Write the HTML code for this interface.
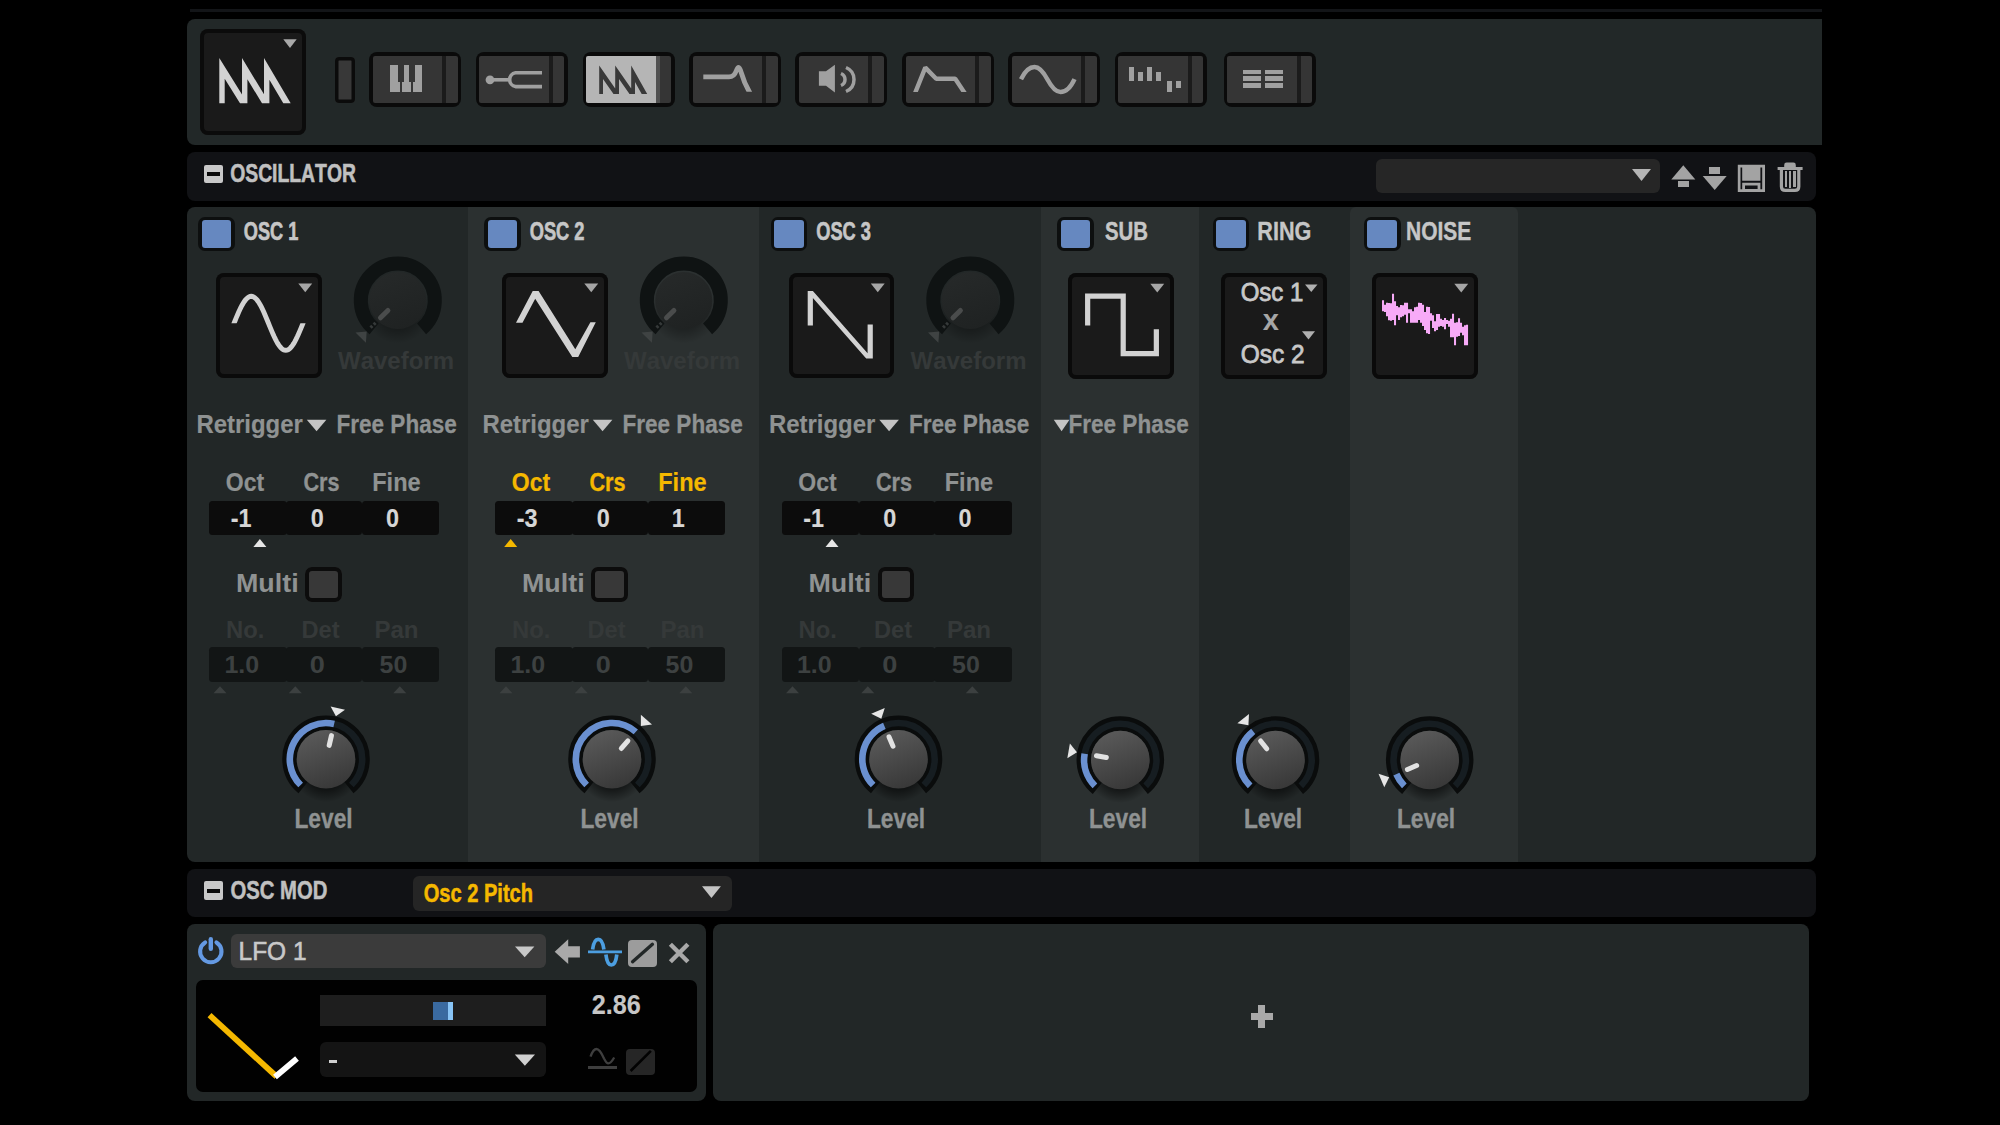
<!DOCTYPE html>
<html><head><meta charset="utf-8"><title>Oscillator</title>
<style>
html,body{margin:0;padding:0;background:#000;width:2000px;height:1125px;overflow:hidden;}
#root{position:relative;width:2000px;height:1125px;background:#000;}
#root>div{position:absolute;}
svg{position:absolute;left:0;top:0;}
text{font-family:"Liberation Sans",sans-serif;font-kerning:none;}
</style></head><body><div id="root">
<div style="left:190.00px;top:9.00px;width:1632.00px;height:3.30px;background:#131518;"></div>
<div style="left:187.00px;top:19.00px;width:1635.00px;height:126.00px;background:#222828;border-radius:8px 0 0 8px;"></div>
<div style="left:200.00px;top:29.00px;width:106.00px;height:106.00px;background:#1a1a1a;border-radius:8px;box-shadow:inset 0 0 0 4px #0b0b0b;"></div>
<div style="left:335.30px;top:56.70px;width:19.40px;height:46.00px;background:#383838;border-radius:4px;box-shadow:inset 0 0 0 3.5px #0b0b0b;"></div>
<div style="left:369.00px;top:52.00px;width:92.00px;height:54.50px;background:#0a0a0a;border-radius:8px;"></div>
<div style="left:372.50px;top:55.50px;width:69.50px;height:47.50px;background:#353535;border-radius:2px 0 0 2px;"></div>
<div style="left:442.00px;top:55.50px;width:4.00px;height:47.50px;background:#1b1b1b;"></div>
<div style="left:446.00px;top:55.50px;width:11.50px;height:47.50px;background:#353535;border-radius:0 2px 2px 0;"></div>
<div style="left:475.50px;top:52.00px;width:92.00px;height:54.50px;background:#0a0a0a;border-radius:8px;"></div>
<div style="left:479.00px;top:55.50px;width:69.50px;height:47.50px;background:#353535;border-radius:2px 0 0 2px;"></div>
<div style="left:548.50px;top:55.50px;width:4.00px;height:47.50px;background:#1b1b1b;"></div>
<div style="left:552.50px;top:55.50px;width:11.50px;height:47.50px;background:#353535;border-radius:0 2px 2px 0;"></div>
<div style="left:582.50px;top:52.00px;width:92.00px;height:54.50px;background:#0a0a0a;border-radius:8px;"></div>
<div style="left:586.00px;top:55.50px;width:69.50px;height:47.50px;background:#b5b5b5;border-radius:2px 0 0 2px;"></div>
<div style="left:655.50px;top:55.50px;width:4.00px;height:47.50px;background:#505050;"></div>
<div style="left:659.50px;top:55.50px;width:11.50px;height:47.50px;background:#353535;border-radius:0 2px 2px 0;"></div>
<div style="left:689.00px;top:52.00px;width:92.00px;height:54.50px;background:#0a0a0a;border-radius:8px;"></div>
<div style="left:692.50px;top:55.50px;width:69.50px;height:47.50px;background:#353535;border-radius:2px 0 0 2px;"></div>
<div style="left:762.00px;top:55.50px;width:4.00px;height:47.50px;background:#1b1b1b;"></div>
<div style="left:766.00px;top:55.50px;width:11.50px;height:47.50px;background:#353535;border-radius:0 2px 2px 0;"></div>
<div style="left:795.00px;top:52.00px;width:92.00px;height:54.50px;background:#0a0a0a;border-radius:8px;"></div>
<div style="left:798.50px;top:55.50px;width:69.50px;height:47.50px;background:#353535;border-radius:2px 0 0 2px;"></div>
<div style="left:868.00px;top:55.50px;width:4.00px;height:47.50px;background:#1b1b1b;"></div>
<div style="left:872.00px;top:55.50px;width:11.50px;height:47.50px;background:#353535;border-radius:0 2px 2px 0;"></div>
<div style="left:902.00px;top:52.00px;width:92.00px;height:54.50px;background:#0a0a0a;border-radius:8px;"></div>
<div style="left:905.50px;top:55.50px;width:69.50px;height:47.50px;background:#353535;border-radius:2px 0 0 2px;"></div>
<div style="left:975.00px;top:55.50px;width:4.00px;height:47.50px;background:#1b1b1b;"></div>
<div style="left:979.00px;top:55.50px;width:11.50px;height:47.50px;background:#353535;border-radius:0 2px 2px 0;"></div>
<div style="left:1008.00px;top:52.00px;width:92.00px;height:54.50px;background:#0a0a0a;border-radius:8px;"></div>
<div style="left:1011.50px;top:55.50px;width:69.50px;height:47.50px;background:#353535;border-radius:2px 0 0 2px;"></div>
<div style="left:1081.00px;top:55.50px;width:4.00px;height:47.50px;background:#1b1b1b;"></div>
<div style="left:1085.00px;top:55.50px;width:11.50px;height:47.50px;background:#353535;border-radius:0 2px 2px 0;"></div>
<div style="left:1114.50px;top:52.00px;width:92.00px;height:54.50px;background:#0a0a0a;border-radius:8px;"></div>
<div style="left:1118.00px;top:55.50px;width:69.50px;height:47.50px;background:#353535;border-radius:2px 0 0 2px;"></div>
<div style="left:1187.50px;top:55.50px;width:4.00px;height:47.50px;background:#1b1b1b;"></div>
<div style="left:1191.50px;top:55.50px;width:11.50px;height:47.50px;background:#353535;border-radius:0 2px 2px 0;"></div>
<div style="left:1223.50px;top:52.00px;width:92.00px;height:54.50px;background:#0a0a0a;border-radius:8px;"></div>
<div style="left:1227.00px;top:55.50px;width:69.50px;height:47.50px;background:#353535;border-radius:2px 0 0 2px;"></div>
<div style="left:1296.50px;top:55.50px;width:4.00px;height:47.50px;background:#1b1b1b;"></div>
<div style="left:1300.50px;top:55.50px;width:11.50px;height:47.50px;background:#353535;border-radius:0 2px 2px 0;"></div>
<div style="left:390.40px;top:64.80px;width:7.20px;height:18.20px;background:#a0a0a0;"></div>
<div style="left:404.00px;top:64.80px;width:4.80px;height:18.20px;background:#a0a0a0;"></div>
<div style="left:415.20px;top:64.80px;width:6.80px;height:18.20px;background:#a0a0a0;"></div>
<div style="left:390.40px;top:82.00px;width:9.30px;height:10.00px;background:#a0a0a0;"></div>
<div style="left:401.90px;top:82.00px;width:9.00px;height:10.00px;background:#a0a0a0;"></div>
<div style="left:413.10px;top:82.00px;width:8.90px;height:10.00px;background:#a0a0a0;"></div>
<div style="left:1129.30px;top:67.20px;width:5.10px;height:13.60px;background:#a0a0a0;"></div>
<div style="left:1138.40px;top:71.70px;width:4.80px;height:9.10px;background:#a0a0a0;"></div>
<div style="left:1147.20px;top:67.20px;width:4.80px;height:13.60px;background:#a0a0a0;"></div>
<div style="left:1156.00px;top:71.70px;width:5.10px;height:9.10px;background:#a0a0a0;"></div>
<div style="left:1167.20px;top:80.80px;width:4.80px;height:11.20px;background:#a0a0a0;"></div>
<div style="left:1176.00px;top:80.80px;width:5.10px;height:6.90px;background:#a0a0a0;"></div>
<div style="left:1242.90px;top:69.60px;width:18.20px;height:4.30px;background:#a0a0a0;"></div>
<div style="left:1242.90px;top:76.30px;width:18.20px;height:4.50px;background:#a0a0a0;"></div>
<div style="left:1242.90px;top:83.20px;width:18.20px;height:4.50px;background:#a0a0a0;"></div>
<div style="left:1264.80px;top:69.60px;width:18.40px;height:4.30px;background:#a0a0a0;"></div>
<div style="left:1264.80px;top:76.30px;width:18.40px;height:4.50px;background:#a0a0a0;"></div>
<div style="left:1264.80px;top:83.20px;width:18.40px;height:4.50px;background:#a0a0a0;"></div>
<div style="left:187.00px;top:151.50px;width:1628.60px;height:49.00px;background:#111215;border-radius:8px;"></div>
<div style="left:204.00px;top:165.00px;width:18.50px;height:18.20px;background:#c8c8c8;border-radius:2px;"></div>
<div style="left:206.70px;top:172.00px;width:13.00px;height:4.00px;background:#0a0a0a;"></div>
<div style="left:1376.30px;top:158.70px;width:283.70px;height:34.60px;background:#262626;border-radius:6px;"></div>
<div style="left:1678.00px;top:180.80px;width:11.30px;height:6.70px;background:#a3a3a3;"></div>
<div style="left:1709.20px;top:167.00px;width:11.30px;height:6.60px;background:#a3a3a3;"></div>
<div style="left:1784.50px;top:171.20px;width:2.20px;height:15.80px;background:#a3a3a3;"></div>
<div style="left:1788.90px;top:171.20px;width:2.20px;height:16.60px;background:#a3a3a3;"></div>
<div style="left:1793.40px;top:171.20px;width:2.20px;height:15.80px;background:#a3a3a3;"></div>
<div style="left:187.00px;top:207.00px;width:1628.60px;height:654.60px;background:#222727;border-radius:8px;"></div>
<div style="left:468.00px;top:207.00px;width:291.00px;height:654.60px;background:#2b3030;"></div>
<div style="left:1041.00px;top:207.00px;width:158.00px;height:654.60px;background:#2b3030;"></div>
<div style="left:1350.00px;top:207.00px;width:168.40px;height:654.60px;background:#2b3030;border-radius:6px 6px 0 0;"></div>
<div style="left:198.10px;top:216.60px;width:36.80px;height:34.60px;background:#0d0f0f;border-radius:7px;"></div>
<div style="left:201.70px;top:220.10px;width:29.80px;height:27.60px;background:#6688c0;border-radius:3px;"></div>
<div style="left:216.00px;top:272.70px;width:105.50px;height:105.60px;background:#1a1a1a;border-radius:8px;box-shadow:inset 0 0 0 4px #0a0a0a;"></div>
<div style="left:209.00px;top:500.70px;width:77.60px;height:34.40px;background:#0c0c0c;border-radius:3.5px;"></div>
<div style="left:286.10px;top:500.70px;width:76.20px;height:34.40px;background:#0c0c0c;border-radius:3.5px;"></div>
<div style="left:361.80px;top:500.70px;width:77.50px;height:34.40px;background:#0c0c0c;border-radius:3.5px;"></div>
<div style="left:305.00px;top:567.00px;width:36.60px;height:35.20px;background:#383838;border-radius:7px;box-shadow:inset 0 0 0 4px #0c0c0c;"></div>
<div style="left:209.00px;top:646.70px;width:77.60px;height:35.10px;background:#121515;border-radius:3.5px;"></div>
<div style="left:286.10px;top:646.70px;width:76.20px;height:35.10px;background:#121515;border-radius:3.5px;"></div>
<div style="left:361.80px;top:646.70px;width:77.50px;height:35.10px;background:#121515;border-radius:3.5px;"></div>
<div style="left:484.10px;top:216.60px;width:36.80px;height:34.60px;background:#0d0f0f;border-radius:7px;"></div>
<div style="left:487.70px;top:220.10px;width:29.80px;height:27.60px;background:#6688c0;border-radius:3px;"></div>
<div style="left:502.00px;top:272.70px;width:105.50px;height:105.60px;background:#1a1a1a;border-radius:8px;box-shadow:inset 0 0 0 4px #0a0a0a;"></div>
<div style="left:495.00px;top:500.70px;width:77.60px;height:34.40px;background:#0c0c0c;border-radius:3.5px;"></div>
<div style="left:572.10px;top:500.70px;width:76.20px;height:34.40px;background:#0c0c0c;border-radius:3.5px;"></div>
<div style="left:647.80px;top:500.70px;width:77.50px;height:34.40px;background:#0c0c0c;border-radius:3.5px;"></div>
<div style="left:591.00px;top:567.00px;width:36.60px;height:35.20px;background:#383838;border-radius:7px;box-shadow:inset 0 0 0 4px #0c0c0c;"></div>
<div style="left:495.00px;top:646.70px;width:77.60px;height:35.10px;background:#121515;border-radius:3.5px;"></div>
<div style="left:572.10px;top:646.70px;width:76.20px;height:35.10px;background:#121515;border-radius:3.5px;"></div>
<div style="left:647.80px;top:646.70px;width:77.50px;height:35.10px;background:#121515;border-radius:3.5px;"></div>
<div style="left:770.60px;top:216.60px;width:36.80px;height:34.60px;background:#0d0f0f;border-radius:7px;"></div>
<div style="left:774.20px;top:220.10px;width:29.80px;height:27.60px;background:#6688c0;border-radius:3px;"></div>
<div style="left:788.50px;top:272.70px;width:105.50px;height:105.60px;background:#1a1a1a;border-radius:8px;box-shadow:inset 0 0 0 4px #0a0a0a;"></div>
<div style="left:781.50px;top:500.70px;width:77.60px;height:34.40px;background:#0c0c0c;border-radius:3.5px;"></div>
<div style="left:858.60px;top:500.70px;width:76.20px;height:34.40px;background:#0c0c0c;border-radius:3.5px;"></div>
<div style="left:934.30px;top:500.70px;width:77.50px;height:34.40px;background:#0c0c0c;border-radius:3.5px;"></div>
<div style="left:877.50px;top:567.00px;width:36.60px;height:35.20px;background:#383838;border-radius:7px;box-shadow:inset 0 0 0 4px #0c0c0c;"></div>
<div style="left:781.50px;top:646.70px;width:77.60px;height:35.10px;background:#121515;border-radius:3.5px;"></div>
<div style="left:858.60px;top:646.70px;width:76.20px;height:35.10px;background:#121515;border-radius:3.5px;"></div>
<div style="left:934.30px;top:646.70px;width:77.50px;height:35.10px;background:#121515;border-radius:3.5px;"></div>
<div style="left:1057.00px;top:216.60px;width:36.80px;height:34.60px;background:#0d0f0f;border-radius:7px;"></div>
<div style="left:1060.60px;top:220.10px;width:29.80px;height:27.60px;background:#6688c0;border-radius:3px;"></div>
<div style="left:1068.00px;top:273.00px;width:105.50px;height:105.60px;background:#1a1a1a;border-radius:8px;box-shadow:inset 0 0 0 4px #0a0a0a;"></div>
<div style="left:1212.50px;top:216.60px;width:36.80px;height:34.60px;background:#0d0f0f;border-radius:7px;"></div>
<div style="left:1216.10px;top:220.10px;width:29.80px;height:27.60px;background:#6688c0;border-radius:3px;"></div>
<div style="left:1221.25px;top:273.00px;width:105.75px;height:105.60px;background:#1a1a1a;border-radius:8px;box-shadow:inset 0 0 0 4px #0a0a0a;"></div>
<div style="left:1363.75px;top:216.60px;width:36.80px;height:34.60px;background:#0d0f0f;border-radius:7px;"></div>
<div style="left:1367.35px;top:220.10px;width:29.80px;height:27.60px;background:#6688c0;border-radius:3px;"></div>
<div style="left:1372.00px;top:273.00px;width:105.50px;height:105.60px;background:#1a1a1a;border-radius:8px;box-shadow:inset 0 0 0 4px #0a0a0a;"></div>
<div style="left:187.00px;top:868.90px;width:1628.70px;height:48.40px;background:#111215;border-radius:8px;"></div>
<div style="left:203.80px;top:881.30px;width:18.80px;height:18.60px;background:#c8c8c8;border-radius:2px;"></div>
<div style="left:206.50px;top:888.60px;width:13.40px;height:4.00px;background:#0a0a0a;"></div>
<div style="left:412.90px;top:875.50px;width:319.60px;height:35.40px;background:#252525;border-radius:6px;"></div>
<div style="left:187.00px;top:924.00px;width:519.00px;height:177.00px;background:#222727;border-radius:8px;"></div>
<div style="left:231.30px;top:933.50px;width:314.70px;height:34.50px;background:#3b3b3b;border-radius:6px;"></div>
<div style="left:628.00px;top:940.00px;width:29.00px;height:26.60px;background:#9c9c9c;border-radius:4px;"></div>
<div style="left:195.70px;top:980.30px;width:501.50px;height:112.20px;background:#010101;border-radius:7px;"></div>
<div style="left:319.60px;top:995.10px;width:226.20px;height:31.00px;background:#1e1e1e;"></div>
<div style="left:433.10px;top:1001.80px;width:15.00px;height:18.20px;background:#3a6aa0;"></div>
<div style="left:448.10px;top:1001.80px;width:5.00px;height:18.20px;background:#88c4f6;"></div>
<div style="left:319.60px;top:1042.30px;width:226.20px;height:34.30px;background:#141414;border-radius:6px;"></div>
<div style="left:328.50px;top:1059.50px;width:8.10px;height:3.50px;background:#d0d0d0;"></div>
<div style="left:588.40px;top:1066.00px;width:28.70px;height:2.50px;background:#3e3e3e;"></div>
<div style="left:626.00px;top:1048.50px;width:28.60px;height:26.20px;background:#262626;border-radius:4px;"></div>
<div style="left:712.50px;top:924.40px;width:1096.50px;height:176.80px;background:#222727;border-radius:8px;"></div>
<div style="left:1250.60px;top:1012.80px;width:22.40px;height:7.00px;background:#a9a9a9;"></div>
<div style="left:1258.20px;top:1005.00px;width:7.00px;height:22.60px;background:#a9a9a9;"></div>
<svg width="2000" height="1125" viewBox="0 0 2000 1125">
<defs>
<linearGradient id="cap" x1="0.3" y1="0" x2="0.7" y2="1"><stop offset="0" stop-color="#5a5a5a"/><stop offset="1" stop-color="#373737"/></linearGradient>
<linearGradient id="capd" x1="0.3" y1="0" x2="0.7" y2="1"><stop offset="0" stop-color="#262929"/><stop offset="1" stop-color="#1f2222"/></linearGradient>
<radialGradient id="shd"><stop offset="0.55" stop-color="#000" stop-opacity="0.55"/><stop offset="1" stop-color="#000" stop-opacity="0"/></radialGradient>
</defs>
<path d="M283.30,39.30L296.70,39.30L290.00,48.00Z" fill="#a9a9a9"/>
<path d="M219.30,103.30L219.30,58.00L242.00,94.59L242.00,58.00L264.00,94.37L264.00,58.00L290.70,103.30L283.30,103.30L269.40,79.72L269.40,103.30L262.00,103.30L247.40,79.16L247.40,103.30L240.00,103.30L224.70,78.63L224.70,103.30Z" fill="#d2d2d2"/>
<circle cx="490" cy="79.8" r="4.4" fill="#a0a0a0"/>
<path d="M490,79.8H509" stroke="#a0a0a0" stroke-width="3.6" fill="none"/>
<path d="M542,72.8H515.5A7,7 0 0 0 515.5,86.6H542" stroke="#a0a0a0" stroke-width="3.6" fill="none"/>
<path d="M599.20,94.00L599.20,65.60L615.20,88.55L615.20,65.60L631.20,88.55L631.20,65.60L647.20,94.00L641.70,94.00L635.00,82.11L635.00,94.00L629.50,94.00L619.00,78.94L619.00,94.00L613.50,94.00L603.00,78.94L603.00,94.00Z" fill="#393939"/>
<clipPath id="fclip"><rect x="690" y="55" width="70" height="36.8"/></clipPath>
<path d="M703.3,76.9H729C733.5,76.9 735,74.5 736.2,71C737.2,68.2 737.8,67.4 738.6,67.4C739.6,67.4 740.2,68.8 741.2,72.5C743.2,79.5 745.6,86 750.6,94" fill="none" stroke="#a0a0a0" stroke-width="4.8" clip-path="url(#fclip)"/>
<path d="M818.9,71.2H826L834.9,64.8V92.4L826,85.8H818.9Z" fill="#a0a0a0"/>
<path d="M841,73.5A6.5,6.5 0 0 1 841,85.5" fill="none" stroke="#a0a0a0" stroke-width="3.5"/>
<path d="M846,67.5A13,13 0 0 1 846,91.5" fill="none" stroke="#a0a0a0" stroke-width="3.5"/>
<clipPath id="eclip"><rect x="900" y="55" width="80" height="36.9"/></clipPath>
<path d="M914.3,95L925.3,67.6L936.2,78.8H955.2L966,95" fill="none" stroke="#a0a0a0" stroke-width="4.4" stroke-linejoin="bevel" clip-path="url(#eclip)"/>
<path d="M1021,79.2C1025,71 1030,67 1034.5,67C1040,67 1044,73 1047.5,79.5C1051,86 1055,92 1060.5,92C1066,92 1071,87 1074.5,79.2" fill="none" stroke="#a0a0a0" stroke-width="4.5"/>
<text x="230.21" y="182.30" font-size="26.60" font-weight="bold" fill="#c0c0c0" textLength="125.69" lengthAdjust="spacingAndGlyphs"  stroke="#c0c0c0" stroke-width="0.61">OSCILLATOR</text>
<path d="M1632.00,169.00L1651.00,169.00L1641.50,181.00Z" fill="#b4b4b4"/>
<path d="M1671.3,179.6L1683.3,165.2L1695.3,179.6Z" fill="#a3a3a3"/>
<path d="M1702.7,176L1726.7,176L1714.7,190Z" fill="#a3a3a3"/>
<path d="M1737.8,164.8H1765V192H1737.8Z M1740.5,167.6V189.2H1742.2V182.8H1760.4V189.2H1762.2V167.6H1760.4V180.8H1742.2V167.6Z M1745,185.6V189H1757.6V185.6Z" fill="#a3a3a3" fill-rule="evenodd"/>
<path d="M1784.2,167V165Q1784.2,162.6 1786.6,162.6H1793.4Q1795.8,162.6 1795.8,165V167H1802.6V170H1777.6V167Z" fill="#a3a3a3"/>
<path d="M1781.4,169.5V186.5Q1781.4,190.4 1785.3,190.4H1794.9Q1798.8,190.4 1798.8,186.5V169.5" fill="none" stroke="#a3a3a3" stroke-width="3.2"/>
<text x="243.76" y="239.75" font-size="26.16" font-weight="bold" fill="#c6c6c6" textLength="54.50" lengthAdjust="spacingAndGlyphs"  stroke="#c6c6c6" stroke-width="0.69">OSC 1</text>
<path d="M298.30,283.40L312.20,283.40L305.25,292.30Z" fill="#a6a6a6"/>
<clipPath id="sinc"><path d="M214,270H250V323.3H214Z M250,270H290V380H250Z M290,323.3H324V380H290Z"/></clipPath>
<path d="M232.50,329.30L234.00,323.30L235.15,320.48L236.30,317.69L237.45,314.96L238.60,312.32L239.75,309.80L240.90,307.43L242.05,305.23L243.20,303.24L244.35,301.46L245.50,299.92L246.65,298.63L247.80,297.62L248.95,296.89L250.10,296.45L251.25,296.30L252.40,296.45L253.55,296.89L254.70,297.62L255.85,298.63L257.00,299.92L258.15,301.46L259.30,303.24L260.45,305.23L261.60,307.43L262.75,309.80L263.90,312.32L265.05,314.96L266.20,317.69L267.35,320.48L268.50,323.30L269.65,326.12L270.80,328.91L271.95,331.64L273.10,334.28L274.25,336.80L275.40,339.17L276.55,341.37L277.70,343.36L278.85,345.14L280.00,346.68L281.15,347.97L282.30,348.98L283.45,349.71L284.60,350.15L285.75,350.30L286.90,350.15L288.05,349.71L289.20,348.98L290.35,347.97L291.50,346.68L292.65,345.14L293.80,343.36L294.95,341.37L296.10,339.17L297.25,336.80L298.40,334.28L299.55,331.64L300.70,328.91L301.85,326.12L303.00,323.30L304.50,317.30" fill="none" stroke="#d2d2d2" stroke-width="4.9" clip-path="url(#sinc)"/>
<ellipse cx="397.80" cy="312.50" rx="33" ry="31" fill="url(#shd)" opacity="0.5"/>
<path d="M374.02,328.84A37,37 0 1 1 421.58,328.84" fill="none" stroke="#0f1313" stroke-width="14"/>
<circle cx="397.80" cy="300.50" r="28.5" fill="url(#capd)"/>
<path d="M387.90,310.40L380.48,317.82" stroke="#4a4c4c" stroke-width="5" stroke-linecap="round"/>
<path d="M375.53,322.77L369.87,328.43" stroke="#353939" stroke-width="3.2" stroke-dasharray="2.5 2"/>
<path d="M366.69,331.61L365.90,342.83L355.47,332.40Z" fill="#3f4343"/>
<text x="337.98" y="369.00" font-size="24.71" font-weight="bold" fill="#353939" textLength="116.11" lengthAdjust="spacingAndGlyphs" >Waveform</text>
<text x="196.40" y="432.70" font-size="25.73" font-weight="bold" fill="#8f9292" textLength="106.36" lengthAdjust="spacingAndGlyphs"  stroke="#8f9292" stroke-width="0.16">Retrigger</text>
<path d="M306.80,419.70L326.40,419.70L316.60,431.30Z" fill="#c4c4c4"/>
<text x="336.49" y="432.70" font-size="25.73" font-weight="bold" fill="#8f9292" textLength="120.28" lengthAdjust="spacingAndGlyphs"  stroke="#8f9292" stroke-width="0.28">Free Phase</text>
<text x="225.76" y="490.70" font-size="25.29" font-weight="bold" fill="#8f9292" textLength="38.32" lengthAdjust="spacingAndGlyphs"  stroke="#8f9292" stroke-width="0.20">Oct</text>
<text x="303.51" y="490.70" font-size="25.29" font-weight="bold" fill="#8f9292" textLength="36.07" lengthAdjust="spacingAndGlyphs"  stroke="#8f9292" stroke-width="0.33">Crs</text>
<text x="372.23" y="490.70" font-size="25.29" font-weight="bold" fill="#8f9292" textLength="48.38" lengthAdjust="spacingAndGlyphs"  stroke="#8f9292" stroke-width="0.16">Fine</text>
<text x="230.67" y="526.90" font-size="25.15" font-weight="bold" fill="#d6d6d6" textLength="20.79" lengthAdjust="spacingAndGlyphs"  stroke="#d6d6d6" stroke-width="0.16">-1</text>
<text x="310.81" y="526.90" font-size="25.15" font-weight="bold" fill="#d6d6d6" textLength="13.01" lengthAdjust="spacingAndGlyphs"  stroke="#d6d6d6" stroke-width="0.16">0</text>
<text x="386.11" y="526.90" font-size="25.15" font-weight="bold" fill="#d6d6d6" textLength="13.01" lengthAdjust="spacingAndGlyphs"  stroke="#d6d6d6" stroke-width="0.16">0</text>
<path d="M253.40,547.10L266.40,547.10L259.90,538.90Z" fill="#e6e6e6"/>
<text x="236.00" y="592.20" font-size="25.87" font-weight="bold" fill="#8f9292" textLength="62.60" lengthAdjust="spacingAndGlyphs" >Multi</text>
<text x="226.01" y="637.80" font-size="24.42" font-weight="bold" fill="#353939" textLength="38.33" lengthAdjust="spacingAndGlyphs" >No.</text>
<text x="301.52" y="637.80" font-size="24.42" font-weight="bold" fill="#353939" textLength="38.07" lengthAdjust="spacingAndGlyphs"  stroke="#353939" stroke-width="0.07">Det</text>
<text x="374.39" y="637.80" font-size="24.42" font-weight="bold" fill="#353939" textLength="44.21" lengthAdjust="spacingAndGlyphs" >Pan</text>
<text x="224.42" y="672.50" font-size="24.56" font-weight="bold" fill="#3d4141" textLength="34.80" lengthAdjust="spacingAndGlyphs" >1.0</text>
<text x="309.83" y="672.50" font-size="24.56" font-weight="bold" fill="#3d4141" textLength="15.09" lengthAdjust="spacingAndGlyphs" >0</text>
<text x="379.63" y="672.50" font-size="24.56" font-weight="bold" fill="#3d4141" textLength="27.79" lengthAdjust="spacingAndGlyphs" >50</text>
<path d="M213.50,693.30L226.50,693.30L220.00,686.20Z" fill="#3c4040"/>
<path d="M288.80,693.30L301.80,693.30L295.30,686.20Z" fill="#3c4040"/>
<path d="M393.30,693.30L406.30,693.30L399.80,686.20Z" fill="#3c4040"/>
<ellipse cx="326.00" cy="771.20" rx="33" ry="31" fill="url(#shd)" opacity="1"/>
<path d="M303.03,787.57A36.5,36.5 0 1 1 348.97,787.57" fill="none" stroke="#0a0c0c" stroke-width="14.5"/>
<path d="M300.63,785.02A36.2,36.2 0 1 1 351.37,785.02" fill="none" stroke="#161d21" stroke-width="6.6"/>
<path d="M300.63,785.02A36.2,36.2 0 0 1 334.14,723.93" fill="none" stroke="#6a90d0" stroke-width="6.6"/>
<circle cx="326.00" cy="759.20" r="29.3" fill="url(#cap)"/>
<path d="M329.19,745.36L331.44,735.62" stroke="#e2e2e2" stroke-width="5" stroke-linecap="round"/>
<path d="M335.90,716.33L330.62,706.40L344.99,709.72Z" fill="#e6e6e6"/>
<text x="294.48" y="827.80" font-size="26.89" font-weight="bold" fill="#8f9292" textLength="58.13" lengthAdjust="spacingAndGlyphs"  stroke="#8f9292" stroke-width="0.35">Level</text>
<text x="529.75" y="239.75" font-size="26.16" font-weight="bold" fill="#c6c6c6" textLength="54.73" lengthAdjust="spacingAndGlyphs"  stroke="#c6c6c6" stroke-width="0.68">OSC 2</text>
<path d="M584.30,283.40L598.20,283.40L591.25,292.30Z" fill="#a6a6a6"/>
<path d="M516,322.8L532.7,291L538.6,291L575.3,349.2L590.4,322.3L595.8,322.3L578.2,357L572.3,357L535.2,298.8L522.5,322.8Z" fill="#d2d2d2"/>
<ellipse cx="683.80" cy="312.50" rx="33" ry="31" fill="url(#shd)" opacity="0.5"/>
<path d="M660.02,328.84A37,37 0 1 1 707.58,328.84" fill="none" stroke="#0f1313" stroke-width="14"/>
<circle cx="683.80" cy="300.50" r="28.5" fill="url(#capd)"/>
<path d="M673.90,310.40L666.48,317.82" stroke="#4a4c4c" stroke-width="5" stroke-linecap="round"/>
<path d="M661.53,322.77L655.87,328.43" stroke="#353939" stroke-width="3.2" stroke-dasharray="2.5 2"/>
<path d="M652.69,331.61L651.90,342.83L641.47,332.40Z" fill="#3f4343"/>
<text x="623.98" y="369.00" font-size="24.71" font-weight="bold" fill="#353939" textLength="116.11" lengthAdjust="spacingAndGlyphs" >Waveform</text>
<text x="482.40" y="432.70" font-size="25.73" font-weight="bold" fill="#8f9292" textLength="106.36" lengthAdjust="spacingAndGlyphs"  stroke="#8f9292" stroke-width="0.16">Retrigger</text>
<path d="M592.80,419.70L612.40,419.70L602.60,431.30Z" fill="#c4c4c4"/>
<text x="622.49" y="432.70" font-size="25.73" font-weight="bold" fill="#8f9292" textLength="120.28" lengthAdjust="spacingAndGlyphs"  stroke="#8f9292" stroke-width="0.28">Free Phase</text>
<text x="511.76" y="490.70" font-size="25.29" font-weight="bold" fill="#f5b800" textLength="38.32" lengthAdjust="spacingAndGlyphs"  stroke="#f5b800" stroke-width="0.20">Oct</text>
<text x="589.51" y="490.70" font-size="25.29" font-weight="bold" fill="#f5b800" textLength="36.07" lengthAdjust="spacingAndGlyphs"  stroke="#f5b800" stroke-width="0.33">Crs</text>
<text x="658.23" y="490.70" font-size="25.29" font-weight="bold" fill="#f5b800" textLength="48.38" lengthAdjust="spacingAndGlyphs"  stroke="#f5b800" stroke-width="0.16">Fine</text>
<text x="516.77" y="526.90" font-size="25.15" font-weight="bold" fill="#d6d6d6" textLength="20.79" lengthAdjust="spacingAndGlyphs"  stroke="#d6d6d6" stroke-width="0.16">-3</text>
<text x="596.81" y="526.90" font-size="25.15" font-weight="bold" fill="#d6d6d6" textLength="13.01" lengthAdjust="spacingAndGlyphs"  stroke="#d6d6d6" stroke-width="0.16">0</text>
<text x="671.69" y="526.90" font-size="25.15" font-weight="bold" fill="#d6d6d6" textLength="13.01" lengthAdjust="spacingAndGlyphs"  stroke="#d6d6d6" stroke-width="0.16">1</text>
<path d="M504.20,547.10L517.20,547.10L510.70,538.90Z" fill="#f5b800"/>
<text x="522.00" y="592.20" font-size="25.87" font-weight="bold" fill="#8f9292" textLength="62.60" lengthAdjust="spacingAndGlyphs" >Multi</text>
<text x="512.01" y="637.80" font-size="24.42" font-weight="bold" fill="#353939" textLength="38.33" lengthAdjust="spacingAndGlyphs" >No.</text>
<text x="587.52" y="637.80" font-size="24.42" font-weight="bold" fill="#353939" textLength="38.07" lengthAdjust="spacingAndGlyphs"  stroke="#353939" stroke-width="0.07">Det</text>
<text x="660.39" y="637.80" font-size="24.42" font-weight="bold" fill="#353939" textLength="44.21" lengthAdjust="spacingAndGlyphs" >Pan</text>
<text x="510.42" y="672.50" font-size="24.56" font-weight="bold" fill="#3d4141" textLength="34.80" lengthAdjust="spacingAndGlyphs" >1.0</text>
<text x="595.83" y="672.50" font-size="24.56" font-weight="bold" fill="#3d4141" textLength="15.09" lengthAdjust="spacingAndGlyphs" >0</text>
<text x="665.63" y="672.50" font-size="24.56" font-weight="bold" fill="#3d4141" textLength="27.79" lengthAdjust="spacingAndGlyphs" >50</text>
<path d="M499.50,693.30L512.50,693.30L506.00,686.20Z" fill="#3c4040"/>
<path d="M574.80,693.30L587.80,693.30L581.30,686.20Z" fill="#3c4040"/>
<path d="M679.30,693.30L692.30,693.30L685.80,686.20Z" fill="#3c4040"/>
<ellipse cx="612.00" cy="771.20" rx="33" ry="31" fill="url(#shd)" opacity="1"/>
<path d="M589.03,787.57A36.5,36.5 0 1 1 634.97,787.57" fill="none" stroke="#0a0c0c" stroke-width="14.5"/>
<path d="M586.63,785.02A36.2,36.2 0 1 1 637.37,785.02" fill="none" stroke="#161d21" stroke-width="6.6"/>
<path d="M586.63,785.02A36.2,36.2 0 0 1 635.75,731.88" fill="none" stroke="#6a90d0" stroke-width="6.6"/>
<circle cx="612.00" cy="759.20" r="29.3" fill="url(#cap)"/>
<path d="M621.32,748.48L627.88,740.94" stroke="#e2e2e2" stroke-width="5" stroke-linecap="round"/>
<path d="M640.87,725.99L640.87,714.75L652.00,724.43Z" fill="#e6e6e6"/>
<text x="580.48" y="827.80" font-size="26.89" font-weight="bold" fill="#8f9292" textLength="58.13" lengthAdjust="spacingAndGlyphs"  stroke="#8f9292" stroke-width="0.35">Level</text>
<text x="816.25" y="239.75" font-size="26.16" font-weight="bold" fill="#c6c6c6" textLength="54.66" lengthAdjust="spacingAndGlyphs"  stroke="#c6c6c6" stroke-width="0.68">OSC 3</text>
<path d="M870.80,283.40L884.70,283.40L877.75,292.30Z" fill="#a6a6a6"/>
<path d="M807.7,325.5L807.7,291L812.9,291L867.6,353.3L867.6,324.6L872.8,324.6L872.8,358.5L866.2,358.5L812.9,297.9L812.9,325.5Z" fill="#d2d2d2"/>
<ellipse cx="970.30" cy="312.50" rx="33" ry="31" fill="url(#shd)" opacity="0.5"/>
<path d="M946.52,328.84A37,37 0 1 1 994.08,328.84" fill="none" stroke="#0f1313" stroke-width="14"/>
<circle cx="970.30" cy="300.50" r="28.5" fill="url(#capd)"/>
<path d="M960.40,310.40L952.98,317.82" stroke="#4a4c4c" stroke-width="5" stroke-linecap="round"/>
<path d="M948.03,322.77L942.37,328.43" stroke="#353939" stroke-width="3.2" stroke-dasharray="2.5 2"/>
<path d="M939.19,331.61L938.40,342.83L927.97,332.40Z" fill="#3f4343"/>
<text x="910.48" y="369.00" font-size="24.71" font-weight="bold" fill="#353939" textLength="116.11" lengthAdjust="spacingAndGlyphs" >Waveform</text>
<text x="768.90" y="432.70" font-size="25.73" font-weight="bold" fill="#8f9292" textLength="106.36" lengthAdjust="spacingAndGlyphs"  stroke="#8f9292" stroke-width="0.16">Retrigger</text>
<path d="M879.30,419.70L898.90,419.70L889.10,431.30Z" fill="#c4c4c4"/>
<text x="908.99" y="432.70" font-size="25.73" font-weight="bold" fill="#8f9292" textLength="120.28" lengthAdjust="spacingAndGlyphs"  stroke="#8f9292" stroke-width="0.28">Free Phase</text>
<text x="798.26" y="490.70" font-size="25.29" font-weight="bold" fill="#8f9292" textLength="38.32" lengthAdjust="spacingAndGlyphs"  stroke="#8f9292" stroke-width="0.20">Oct</text>
<text x="876.01" y="490.70" font-size="25.29" font-weight="bold" fill="#8f9292" textLength="36.07" lengthAdjust="spacingAndGlyphs"  stroke="#8f9292" stroke-width="0.33">Crs</text>
<text x="944.73" y="490.70" font-size="25.29" font-weight="bold" fill="#8f9292" textLength="48.38" lengthAdjust="spacingAndGlyphs"  stroke="#8f9292" stroke-width="0.16">Fine</text>
<text x="803.17" y="526.90" font-size="25.15" font-weight="bold" fill="#d6d6d6" textLength="20.79" lengthAdjust="spacingAndGlyphs"  stroke="#d6d6d6" stroke-width="0.16">-1</text>
<text x="883.31" y="526.90" font-size="25.15" font-weight="bold" fill="#d6d6d6" textLength="13.01" lengthAdjust="spacingAndGlyphs"  stroke="#d6d6d6" stroke-width="0.16">0</text>
<text x="958.61" y="526.90" font-size="25.15" font-weight="bold" fill="#d6d6d6" textLength="13.01" lengthAdjust="spacingAndGlyphs"  stroke="#d6d6d6" stroke-width="0.16">0</text>
<path d="M825.50,547.10L838.50,547.10L832.00,538.90Z" fill="#e6e6e6"/>
<text x="808.50" y="592.20" font-size="25.87" font-weight="bold" fill="#8f9292" textLength="62.60" lengthAdjust="spacingAndGlyphs" >Multi</text>
<text x="798.51" y="637.80" font-size="24.42" font-weight="bold" fill="#353939" textLength="38.33" lengthAdjust="spacingAndGlyphs" >No.</text>
<text x="874.02" y="637.80" font-size="24.42" font-weight="bold" fill="#353939" textLength="38.07" lengthAdjust="spacingAndGlyphs"  stroke="#353939" stroke-width="0.07">Det</text>
<text x="946.89" y="637.80" font-size="24.42" font-weight="bold" fill="#353939" textLength="44.21" lengthAdjust="spacingAndGlyphs" >Pan</text>
<text x="796.92" y="672.50" font-size="24.56" font-weight="bold" fill="#3d4141" textLength="34.80" lengthAdjust="spacingAndGlyphs" >1.0</text>
<text x="882.33" y="672.50" font-size="24.56" font-weight="bold" fill="#3d4141" textLength="15.09" lengthAdjust="spacingAndGlyphs" >0</text>
<text x="952.13" y="672.50" font-size="24.56" font-weight="bold" fill="#3d4141" textLength="27.79" lengthAdjust="spacingAndGlyphs" >50</text>
<path d="M786.00,693.30L799.00,693.30L792.50,686.20Z" fill="#3c4040"/>
<path d="M861.30,693.30L874.30,693.30L867.80,686.20Z" fill="#3c4040"/>
<path d="M965.80,693.30L978.80,693.30L972.30,686.20Z" fill="#3c4040"/>
<ellipse cx="898.50" cy="771.20" rx="33" ry="31" fill="url(#shd)" opacity="1"/>
<path d="M875.53,787.57A36.5,36.5 0 1 1 921.47,787.57" fill="none" stroke="#0a0c0c" stroke-width="14.5"/>
<path d="M873.13,785.02A36.2,36.2 0 1 1 923.87,785.02" fill="none" stroke="#161d21" stroke-width="6.6"/>
<path d="M873.13,785.02A36.2,36.2 0 0 1 884.36,725.88" fill="none" stroke="#6a90d0" stroke-width="6.6"/>
<circle cx="898.50" cy="759.20" r="29.3" fill="url(#cap)"/>
<path d="M892.95,746.13L889.04,736.92" stroke="#e2e2e2" stroke-width="5" stroke-linecap="round"/>
<path d="M881.31,718.70L871.20,713.77L884.78,708.01Z" fill="#e6e6e6"/>
<text x="866.98" y="827.80" font-size="26.89" font-weight="bold" fill="#8f9292" textLength="58.13" lengthAdjust="spacingAndGlyphs"  stroke="#8f9292" stroke-width="0.35">Level</text>
<text x="1104.91" y="239.50" font-size="25.44" font-weight="bold" fill="#c6c6c6" textLength="43.01" lengthAdjust="spacingAndGlyphs"  stroke="#c6c6c6" stroke-width="0.45">SUB</text>
<path d="M1150.30,283.70L1164.20,283.70L1157.25,292.60Z" fill="#a6a6a6"/>
<path d="M1087.65,325.5V296.15H1123.2V353.65H1156.35V329.2" fill="none" stroke="#d2d2d2" stroke-width="5.2" stroke-linejoin="miter"/>
<path d="M1053.75,419.70L1069.50,419.70L1061.62,431.30Z" fill="#c4c4c4"/>
<text x="1068.49" y="432.70" font-size="25.73" font-weight="bold" fill="#8f9292" textLength="120.28" lengthAdjust="spacingAndGlyphs"  stroke="#8f9292" stroke-width="0.28">Free Phase</text>
<ellipse cx="1120.30" cy="772.00" rx="33" ry="31" fill="url(#shd)" opacity="1"/>
<path d="M1097.33,788.37A36.5,36.5 0 1 1 1143.27,788.37" fill="none" stroke="#0a0c0c" stroke-width="14.5"/>
<path d="M1094.93,785.82A36.2,36.2 0 1 1 1145.67,785.82" fill="none" stroke="#161d21" stroke-width="6.6"/>
<path d="M1094.93,785.82A36.2,36.2 0 0 1 1084.65,753.71" fill="none" stroke="#6a90d0" stroke-width="6.6"/>
<circle cx="1120.30" cy="760.00" r="29.3" fill="url(#cap)"/>
<path d="M1106.32,757.53L1096.47,755.80" stroke="#e2e2e2" stroke-width="5" stroke-linecap="round"/>
<path d="M1076.97,752.36L1067.33,758.15L1069.89,743.62Z" fill="#e6e6e6"/>
<text x="1088.98" y="827.80" font-size="26.89" font-weight="bold" fill="#8f9292" textLength="58.13" lengthAdjust="spacingAndGlyphs"  stroke="#8f9292" stroke-width="0.35">Level</text>
<text x="1257.30" y="239.50" font-size="25.44" font-weight="bold" fill="#c6c6c6" textLength="54.04" lengthAdjust="spacingAndGlyphs"  stroke="#c6c6c6" stroke-width="0.34">RING</text>
<text x="1240.66" y="300.50" font-size="26.16" font-weight="normal" fill="#c8c8c8" textLength="62.71" lengthAdjust="spacingAndGlyphs" stroke="#c8c8c8" stroke-width="0.8">Osc 1</text>
<text x="1262.80" y="329.50" font-size="29.83" font-weight="bold" fill="#a6a6a6" textLength="16.16" lengthAdjust="spacingAndGlyphs" >x</text>
<text x="1240.64" y="363.00" font-size="26.16" font-weight="normal" fill="#c8c8c8" textLength="63.89" lengthAdjust="spacingAndGlyphs" stroke="#c8c8c8" stroke-width="0.8">Osc 2</text>
<path d="M1305.00,284.50L1317.50,284.50L1311.25,292.00Z" fill="#b0b0b0"/>
<path d="M1302.00,331.25L1315.00,331.25L1308.50,339.50Z" fill="#b0b0b0"/>
<ellipse cx="1275.50" cy="772.00" rx="33" ry="31" fill="url(#shd)" opacity="1"/>
<path d="M1252.53,788.37A36.5,36.5 0 1 1 1298.47,788.37" fill="none" stroke="#0a0c0c" stroke-width="14.5"/>
<path d="M1250.13,785.82A36.2,36.2 0 1 1 1300.87,785.82" fill="none" stroke="#161d21" stroke-width="6.6"/>
<path d="M1250.13,785.82A36.2,36.2 0 0 1 1253.21,731.47" fill="none" stroke="#6a90d0" stroke-width="6.6"/>
<circle cx="1275.50" cy="760.00" r="29.3" fill="url(#cap)"/>
<path d="M1266.76,748.81L1260.60,740.93" stroke="#e2e2e2" stroke-width="5" stroke-linecap="round"/>
<path d="M1248.41,725.33L1237.37,723.18L1249.00,714.10Z" fill="#e6e6e6"/>
<text x="1243.98" y="827.80" font-size="26.89" font-weight="bold" fill="#8f9292" textLength="58.13" lengthAdjust="spacingAndGlyphs"  stroke="#8f9292" stroke-width="0.35">Level</text>
<text x="1406.10" y="239.50" font-size="25.44" font-weight="bold" fill="#c6c6c6" textLength="65.22" lengthAdjust="spacingAndGlyphs"  stroke="#c6c6c6" stroke-width="0.40">NOISE</text>
<path d="M1454.30,283.70L1468.20,283.70L1461.25,292.60Z" fill="#a6a6a6"/>
<path d="M1382.00,300.33h2.05V311.33h-2.05ZM1384.00,304.67h2.05V312.00h-2.05ZM1386.00,302.67h2.05V316.33h-2.05ZM1388.00,303.00h2.05V320.33h-2.05ZM1390.00,303.33h2.05V320.67h-2.05ZM1392.00,293.67h2.05V320.00h-2.05ZM1394.00,301.33h2.05V325.33h-2.05ZM1396.00,306.00h2.05V315.33h-2.05ZM1398.00,307.33h2.05V320.00h-2.05ZM1400.00,305.00h2.05V317.33h-2.05ZM1402.00,305.33h2.05V316.33h-2.05ZM1404.00,302.67h2.05V314.67h-2.05ZM1406.00,302.67h2.05V322.67h-2.05ZM1408.00,309.33h2.05V313.33h-2.05ZM1410.00,309.33h2.05V322.67h-2.05ZM1412.00,311.33h2.05V322.67h-2.05ZM1414.00,307.33h2.05V322.67h-2.05ZM1416.00,306.67h2.05V322.67h-2.05ZM1418.00,302.67h2.05V320.00h-2.05ZM1420.00,303.00h2.05V322.67h-2.05ZM1422.00,304.67h2.05V326.00h-2.05ZM1424.00,312.00h2.05V330.00h-2.05ZM1426.00,306.67h2.05V333.33h-2.05ZM1428.00,307.00h2.05V334.00h-2.05ZM1430.00,313.33h2.05V320.67h-2.05ZM1432.00,315.33h2.05V328.00h-2.05ZM1434.00,321.33h2.05V331.33h-2.05ZM1436.00,314.00h2.05V330.00h-2.05ZM1438.00,314.00h2.05V326.67h-2.05ZM1440.00,318.67h2.05V326.00h-2.05ZM1442.00,320.00h2.05V326.67h-2.05ZM1444.00,318.00h2.05V329.33h-2.05ZM1446.00,320.00h2.05V324.00h-2.05ZM1448.00,320.67h2.05V326.67h-2.05ZM1450.00,318.67h2.05V337.33h-2.05ZM1452.00,313.67h2.05V337.33h-2.05ZM1454.00,322.67h2.05V345.33h-2.05ZM1456.00,322.33h2.05V336.67h-2.05ZM1458.00,318.33h2.05V336.00h-2.05ZM1460.00,322.67h2.05V332.67h-2.05ZM1462.00,326.67h2.05V335.33h-2.05ZM1464.00,325.33h2.05V345.33h-2.05ZM1466.00,324.67h2.05V345.33h-2.05Z" fill="#f7aaf7"/>
<ellipse cx="1429.70" cy="772.00" rx="33" ry="31" fill="url(#shd)" opacity="1"/>
<path d="M1406.73,788.37A36.5,36.5 0 1 1 1452.67,788.37" fill="none" stroke="#0a0c0c" stroke-width="14.5"/>
<path d="M1404.33,785.82A36.2,36.2 0 1 1 1455.07,785.82" fill="none" stroke="#161d21" stroke-width="6.6"/>
<path d="M1404.33,785.82A36.2,36.2 0 0 1 1396.38,774.14" fill="none" stroke="#6a90d0" stroke-width="6.6"/>
<circle cx="1429.70" cy="760.00" r="29.3" fill="url(#cap)"/>
<path d="M1416.63,765.55L1407.42,769.46" stroke="#e2e2e2" stroke-width="5" stroke-linecap="round"/>
<path d="M1389.20,777.19L1384.27,787.30L1378.51,773.72Z" fill="#e6e6e6"/>
<text x="1396.98" y="827.80" font-size="26.89" font-weight="bold" fill="#8f9292" textLength="58.13" lengthAdjust="spacingAndGlyphs"  stroke="#8f9292" stroke-width="0.35">Level</text>
<text x="230.47" y="899.30" font-size="26.16" font-weight="bold" fill="#c0c0c0" textLength="96.88" lengthAdjust="spacingAndGlyphs"  stroke="#c0c0c0" stroke-width="0.51">OSC MOD</text>
<text x="423.68" y="901.60" font-size="26.45" font-weight="bold" fill="#f5b800" textLength="109.37" lengthAdjust="spacingAndGlyphs"  stroke="#f5b800" stroke-width="0.54">Osc 2 Pitch</text>
<path d="M702.00,886.25L720.90,886.25L711.45,897.90Z" fill="#c4c4c4"/>
<path d="M216.47,942.43A10.7,10.7 0 1 1 205.13,942.43" fill="none" stroke="#6499e2" stroke-width="4.1" stroke-linecap="round"/>
<path d="M210.8,939.3V948.8" stroke="#6499e2" stroke-width="4.4" stroke-linecap="round"/>
<text x="238.60" y="959.60" font-size="25.29" font-weight="normal" fill="#c8c8c8" textLength="67.90" lengthAdjust="spacingAndGlyphs" stroke="#c8c8c8" stroke-width="0.6">LFO 1</text>
<path d="M515.00,946.60L534.40,946.60L524.70,957.30Z" fill="#c8c8c8"/>
<path d="M554.7,951.7L568.2,939.3V946.3H579.9V957.5H568.2V964.1Z" fill="#a9a9a9"/>
<path d="M588,951.85H622" stroke="#4c9ee0" stroke-width="2.7"/>
<path d="M592.6,949.5C593.5,942 595.5,939.3 598.25,939.3C601,939.3 603,942 603.9,949.5" fill="none" stroke="#4c9ee0" stroke-width="3.7"/>
<path d="M605.9,954.5C606.8,962 608.5,965 611.25,965C614,965 616,962 616.8,954.5" fill="none" stroke="#4c9ee0" stroke-width="3.7"/>
<path d="M632.6,961.7L652.4,944.3" stroke="#222727" stroke-width="3.4" stroke-linecap="round"/>
<path d="M670.4,944.3L687.9,961.8M687.9,944.3L670.4,961.8" stroke="#a9a9a9" stroke-width="4.4"/>
<path d="M209.5,1015.2L276.5,1076.5" stroke="#f5b800" stroke-width="5.8"/>
<path d="M275,1077L297,1058.5" stroke="#ffffff" stroke-width="5.8"/>
<text x="591.63" y="1013.50" font-size="26.89" font-weight="bold" fill="#c6c6c6" textLength="49.09" lengthAdjust="spacingAndGlyphs"  stroke="#c6c6c6" stroke-width="0.14">2.86</text>
<path d="M514.80,1054.50L535.00,1054.50L524.90,1065.80Z" fill="#d0d0d0"/>
<path d="M590.5,1056.7C592.5,1051 594,1049 596.5,1049C599.5,1049 602,1054 604,1058.5C605.5,1061.5 606.5,1063.4 608.3,1063.4C610.5,1063.4 612.5,1060.5 614.2,1057.5" fill="none" stroke="#3e3e3e" stroke-width="2.3"/>
<path d="M630.6,1071L650.9,1050.8" stroke="#020202" stroke-width="2.6"/>
</svg></div></body></html>
